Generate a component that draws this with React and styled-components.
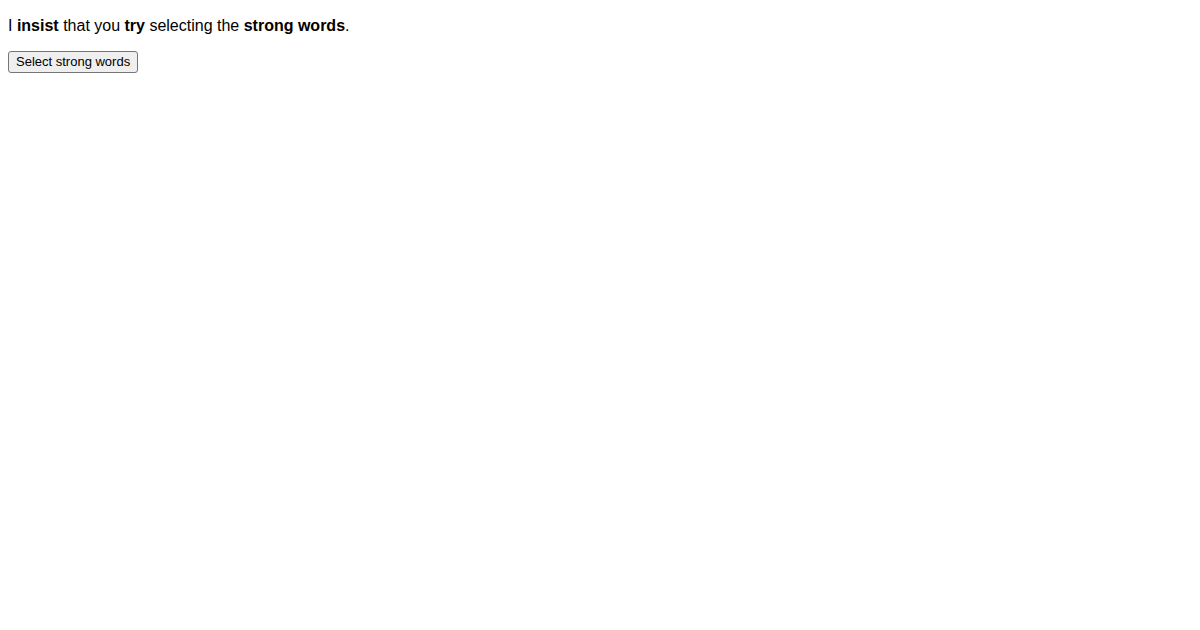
import React, { useRef } from "react";
import styled, { createGlobalStyle } from "styled-components";

const GlobalStyle = createGlobalStyle`
  body {
    margin: 0;
    background: #fff;
    color: #000;
    font-family: "Liberation Sans", Arial, sans-serif;
    font-size: 16px;
  }
`;

const Page = styled.main`
  padding: 16px 8px;
`;

const Paragraph = styled.p`
  margin: 0 0 16px;
  line-height: 19px;
`;

const Strong = styled.strong`
  font-weight: 700;
`;

const SelectButton = styled.button`
  display: block;
  padding: 2px 7px;
  border: 1px solid #767676;
  border-radius: 3px;
  background: #efefef;
  color: #000;
  font-family: inherit;
  font-size: 13px;
  line-height: 16px;
`;

export default function App() {
  const paragraph = useRef(null);

  const selectStrongWords = () => {
    const selection = window.getSelection();
    selection.removeAllRanges();
    paragraph.current.querySelectorAll("strong").forEach((node) => {
      const range = document.createRange();
      range.selectNode(node);
      selection.addRange(range);
    });
  };

  return (
    <Page>
      <GlobalStyle />
      <Paragraph ref={paragraph}>
        I <Strong>insist</Strong> that you <Strong>try</Strong> selecting the{" "}
        <Strong>strong words</Strong>.
      </Paragraph>
      <SelectButton type="button" onClick={selectStrongWords}>
        Select strong words
      </SelectButton>
    </Page>
  );
}
